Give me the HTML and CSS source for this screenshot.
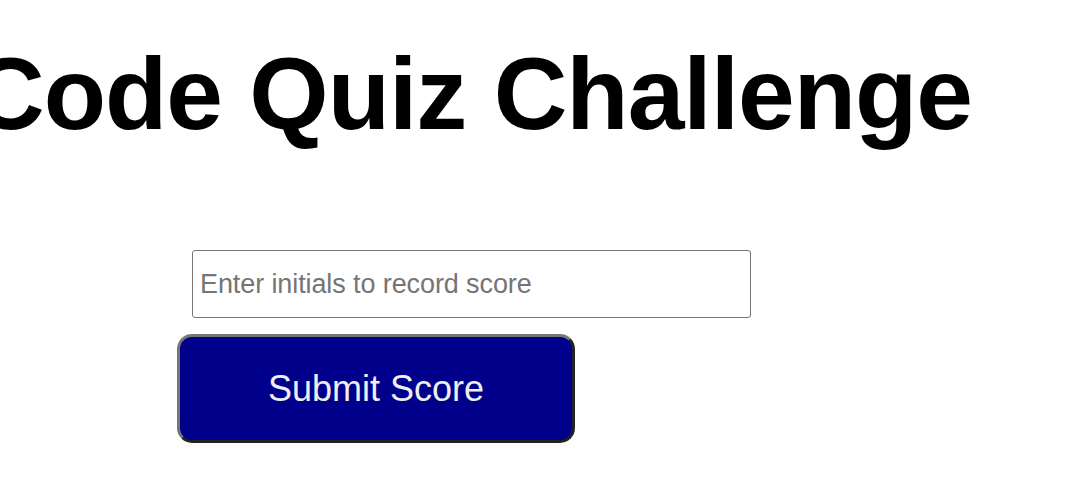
FILE: index.html
```html
<!DOCTYPE html>
<html>
<head>
<meta charset="utf-8">
<link rel="stylesheet" href="styles.css">
</head>
<body>
<header class="header">
  <h1 class="title">Code Quiz Challenge</h1>
</header>
<form class="score-form">
  <input class="initials" type="text" placeholder="Enter initials to record score">
  <button class="submit" type="button">Submit Score</button>
</form>
</body>
</html>
```
FILE: styles.css
```css
html, body {
  margin: 0;
  padding: 0;
  background: #ffffff;
}
body {
  font-family: "Liberation Sans", Arial, sans-serif;
  width: 1092px;
  height: 482px;
  overflow: hidden;
}
.header {
  padding-top: 34px;
}
.title {
  margin: 0 0 0 -29px;
  font-size: 102px;
  font-weight: bold;
  line-height: 120px;
  letter-spacing: -1px;
  color: #000;
  white-space: nowrap;
}
.score-form {
  display: flex;
  flex-direction: column;
  align-items: flex-start;
  padding: 96px 0 0 177px;
}
.initials {
  margin: 0 0 16px 15px;
  box-sizing: border-box;
  width: 559px;
  height: 68px;
  padding: 0 7px;
  border: 1px solid #767676;
  border-radius: 3px;
  font-family: "Liberation Sans", Arial, sans-serif;
  font-size: 27px;
  letter-spacing: -0.1px;
  color: #000;
  outline: none;
}
.initials::placeholder {
  color: #757575;
}
.submit {
  box-sizing: border-box;
  width: 398px;
  height: 109px;
  background: #00008b;
  color: #eeeeee;
  font-family: "Liberation Sans", Arial, sans-serif;
  font-size: 36px;
  border-width: 3px;
  border-style: solid;
  border-color: #767676 #222222 #222222 #767676;
  border-radius: 15px;
  padding: 0;
  cursor: pointer;
}
```
